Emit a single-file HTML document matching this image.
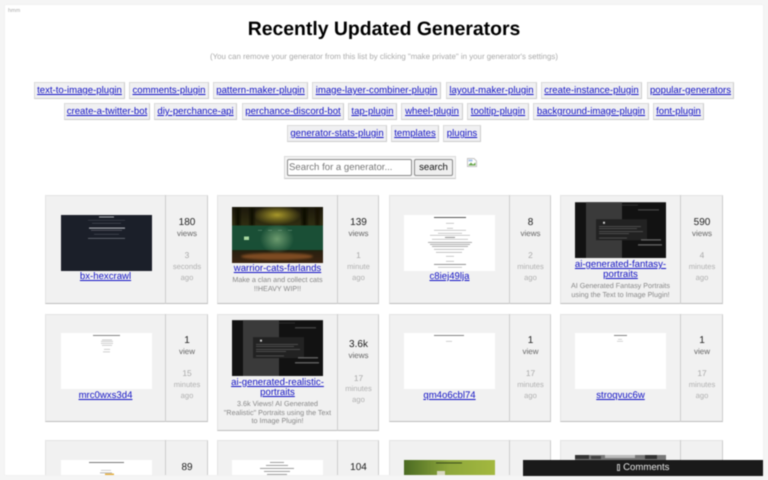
<!DOCTYPE html>
<html lang="en"><head><meta charset="utf-8"><title>Recently Updated Generators</title>
<style>
html,body{margin:0;padding:0;width:768px;height:480px;overflow:hidden;background:#f5f5f5}
body{font-family:"Liberation Sans",sans-serif;text-rendering:geometricPrecision;position:relative}
#all{position:absolute;left:0;top:0;width:768px;height:480px;overflow:hidden;filter:blur(.4px)}
#p{position:absolute;left:5px;top:5px;width:757.5px;height:470px;background:#fff;overflow:hidden;box-shadow:0 0 1px #ddd}
#w{position:absolute;left:-5px;top:-5px;width:768px;height:480px;overflow:hidden}
.a{position:absolute}
.tag{position:absolute;box-sizing:border-box;background:#f0f0f2;border:1px solid #dadada;border-right-color:#ccc;border-bottom-color:#ccc;text-align:center;font-size:9.6px;line-height:15px;white-space:nowrap}
a{color:#1111c4;text-decoration:underline}
.card{position:absolute;box-sizing:border-box;background:#f1f1f1;border:1px solid #e4e4e4;border-right-color:#ccc;border-bottom-color:#bdbdbd}
.open{border-bottom:0}
.div{position:absolute;width:1px;background:#cdcdcd}
.t{position:absolute;text-align:center;line-height:12px;height:12px;white-space:nowrap}
.c1{left:46px;width:119px}.c2{left:218px;width:119px}.c3{left:390px;width:119px}.c4{left:561px;width:119px}
.s1{left:166px;width:42px}.s2{left:338px;width:41px}.s3{left:510px;width:41px}.s4{left:681px;width:42px}
.n{font-size:9.6px}
.nu{font-size:10px;color:#222}
.v{font-size:8px;color:#666}
.g{font-size:8.400px;color:#aaa}
.mi{font-size:7.600px;color:#b0b0b0}
.d{font-size:7.200px;color:#888}
svg{position:absolute;display:block}
.th{filter:blur(.3px)}
</style></head><body><div id="all">
<div id="p"><div id="w">
<div class="t" style="left:8px;top:5px;font-size:5.500px;color:#aaa">hmm</div>
<div class="t" style="left:0;width:768px;top:21.500px;font-size:19.400px;line-height:14px;height:14px;font-weight:bold;color:#000">Recently Updated Generators</div>
<div class="t" style="left:0;width:768px;top:51px;font-size:7.900px;color:#aaa">(You can remove your generator from this list by clicking "make private" in your generator's settings)</div>

<div class="tag" style="left:34px;top:82px;width:91px;height:17px"><a href="#">text-to-image-plugin</a></div>
<div class="tag" style="left:129px;top:82px;width:80px;height:17px"><a href="#">comments-plugin</a></div>
<div class="tag" style="left:213px;top:82px;width:95px;height:17px"><a href="#">pattern-maker-plugin</a></div>
<div class="tag" style="left:312px;top:82px;width:129px;height:17px"><a href="#">image-layer-combiner-plugin</a></div>
<div class="tag" style="left:446px;top:82px;width:91px;height:17px"><a href="#">layout-maker-plugin</a></div>
<div class="tag" style="left:541px;top:82px;width:101px;height:17px"><a href="#">create-instance-plugin</a></div>
<div class="tag" style="left:647px;top:82px;width:87px;height:17px"><a href="#">popular-generators</a></div>

<div class="tag" style="left:64px;top:103px;width:86px;height:17px"><a href="#">create-a-twitter-bot</a></div>
<div class="tag" style="left:154px;top:103px;width:83px;height:17px"><a href="#">diy-perchance-api</a></div>
<div class="tag" style="left:242px;top:103px;width:102px;height:17px"><a href="#">perchance-discord-bot</a></div>
<div class="tag" style="left:348px;top:103px;width:49px;height:17px"><a href="#">tap-plugin</a></div>
<div class="tag" style="left:401px;top:103px;width:62px;height:17px"><a href="#">wheel-plugin</a></div>
<div class="tag" style="left:467px;top:103px;width:62px;height:17px"><a href="#">tooltip-plugin</a></div>
<div class="tag" style="left:533px;top:103px;width:116px;height:17px"><a href="#">background-image-plugin</a></div>
<div class="tag" style="left:653px;top:103px;width:51px;height:17px"><a href="#">font-plugin</a></div>

<div class="tag" style="left:287px;top:125px;width:100px;height:17px"><a href="#">generator-stats-plugin</a></div>
<div class="tag" style="left:391px;top:125px;width:48px;height:17px"><a href="#">templates</a></div>
<div class="tag" style="left:443px;top:125px;width:38px;height:17px"><a href="#">plugins</a></div>

<div class="a" style="left:284px;top:156px;width:172px;height:23px;box-sizing:border-box;background:#f4f4f4;border:1px solid #dadada;border-bottom-color:#c8c8c8"></div>
<div class="a" style="left:287px;top:159px;width:125px;height:17px;box-sizing:border-box;background:#fff;border:1px solid #8a8a8a;border-radius:2px;font-size:9.600px;line-height:15px;color:#777;padding-left:1px;white-space:nowrap">Search for a generator...</div>
<div class="a" style="left:414px;top:159px;width:39px;height:17px;box-sizing:border-box;background:#efefef;border:1px solid #8a8a8a;border-radius:2px;font-size:9.600px;line-height:15px;color:#111;text-align:center">search</div>
<svg style="left:467px;top:158px" width="10" height="9" viewBox="0 0 10 9"><path d="M.5.5H7L9.500 3V8.500H.5Z" fill="#fff" stroke="#c4c4c4"/><path d="M1.500 7L4 4.500 6 6.500 8.500 4.500V7.500H1.500Z" fill="#6aa84f"/><path d="M1.500 1.500H5.500V3.500H1.500Z" fill="#a9c4ea"/></svg>

<!-- Row 1 -->
<div class="card" style="left:45px;top:195px;width:163px;height:109px"></div><div class="div" style="left:165px;top:195px;height:109px"></div>
<svg class="th" style="left:60.500px;top:215px" width="91" height="56" viewBox="0 0 91 56"><rect width="91" height="56" fill="#1b1f29"/><g fill="#8f929a"><rect x="38" y="1.500" width="15" height="1" fill="#aaacb2"/><rect x="27" y="5" width="37" height=".5" opacity=".4"/><rect x="31" y="8" width="29" height=".5" opacity=".5"/><rect x="28" y="12.500" width="36" height="1.200" fill="#a6a8ae"/><rect x="30" y="15" width="31" height=".6" opacity=".7"/><rect x="33" y="19" width="25" height=".5" opacity=".5"/><rect x="27" y="23" width="37" height=".7" opacity=".8"/></g></svg>
<div class="t n c1" style="top:271px"><a href="#">bx-hexcrawl</a></div>
<div class="t nu s1" style="top:216.500px">180</div><div class="t v s1" style="top:228px">views</div><div class="t g s1" style="top:249px">3</div><div class="t mi s1" style="top:260.500px">seconds</div><div class="t mi s1" style="top:271.500px">ago</div>

<div class="card" style="left:217px;top:195px;width:162px;height:109px"></div><div class="div" style="left:337px;top:195px;height:109px"></div>
<svg class="th" style="left:232px;top:206.500px" width="91" height="56" viewBox="0 0 91 56"><defs><linearGradient id="f" x1="0" y1="0" x2="0" y2="1"><stop offset="0" stop-color="#1c180c"/><stop offset=".3" stop-color="#2e2c10"/><stop offset=".75" stop-color="#1a2412"/><stop offset=".82" stop-color="#2c2010"/><stop offset="1" stop-color="#3a2412"/></linearGradient><radialGradient id="l" cx=".5" cy=".5" r=".5"><stop offset="0" stop-color="#a8982a"/><stop offset="1" stop-color="#a8982a" stop-opacity="0"/></radialGradient><radialGradient id="l2" cx=".5" cy=".5" r=".5"><stop offset="0" stop-color="#7aa878" stop-opacity=".85"/><stop offset="1" stop-color="#7aa878" stop-opacity="0"/></radialGradient><filter id="b1"><feGaussianBlur stdDeviation="1"/></filter></defs><rect width="91" height="56" fill="url(#f)"/><ellipse cx="45" cy="8" rx="24" ry="10" fill="url(#l)"/><g filter="url(#b1)"><rect x="4" width="4" height="19" fill="#0e0b06"/><rect x="18" width="4" height="19" fill="#100c06"/><rect x="70" width="5" height="19" fill="#100c06"/><rect x="84" width="3" height="19" fill="#141006"/></g><rect y="18.500" width="91" height="24.500" fill="#195238" opacity=".94"/><ellipse cx="45" cy="32" rx="17" ry="15" fill="url(#l2)"/><rect x="12" y="29.500" width="5" height="3.500" fill="#a8d8a0"/><g fill="#8fb59a" opacity=".6"><rect x="26" y="23" width="4" height=".6"/><rect x="36" y="23" width="4" height=".6"/><rect x="46" y="23" width="4" height=".6"/><rect x="56" y="23" width="4" height=".6"/></g><ellipse cx="45" cy="49.500" rx="36" ry="3.500" fill="#7e4c20" filter="url(#b1)"/></svg>
<div class="t n c2" style="top:262.700px"><a href="#">warrior-cats-farlands</a></div>
<div class="t d c2" style="top:274px">Make a clan and collect cats</div><div class="t d c2" style="top:283px">!!HEAVY WIP!!</div>
<div class="t nu s2" style="top:216.500px">139</div><div class="t v s2" style="top:228px">views</div><div class="t g s2" style="top:249px">1</div><div class="t mi s2" style="top:260.500px">minute</div><div class="t mi s2" style="top:271.500px">ago</div>

<div class="card" style="left:389px;top:195px;width:162px;height:109px"></div><div class="div" style="left:509px;top:195px;height:109px"></div>
<svg class="th" style="left:404px;top:215px" width="91" height="56" viewBox="0 0 91 56"><rect width="91" height="56" fill="#fff"/><g fill="#aaa"><rect x="30" y="2" width="32" height="1" fill="#555"/><rect x="42" y="8" width="8" height=".6"/><rect x="43" y="13" width="6" height=".6"/><rect x="30" y="15" width="32" height=".6"/><rect x="34" y="18" width="24" height=".6"/><rect x="26" y="20" width="40" height=".6"/><rect x="41" y="22" width="10" height=".8" fill="#777"/><rect x="28" y="24" width="36" height=".6"/><rect x="24" y="27" width="44" height=".8" fill="#999"/><rect x="26" y="29" width="40" height=".8" fill="#999"/><rect x="28" y="31" width="36" height=".8" fill="#999"/><rect x="30" y="34" width="30" height=".7"/><rect x="32" y="37" width="26" height=".7"/><rect x="42" y="41" width="8" height=".6"/><rect x="42" y="46" width="8" height=".6"/><rect x="30" y="49" width="32" height=".8" fill="#777"/><rect x="34" y="52" width="24" height=".6"/></g></svg>
<div class="t n c3" style="top:271px"><a href="#">c8iej49lja</a></div>
<div class="t nu s3" style="top:216.500px">8</div><div class="t v s3" style="top:228px">views</div><div class="t g s3" style="top:249px">2</div><div class="t mi s3" style="top:260.500px">minutes</div><div class="t mi s3" style="top:271.500px">ago</div>

<div class="card" style="left:560px;top:195px;width:163px;height:109px"></div><div class="div" style="left:680px;top:195px;height:109px"></div>
<svg class="th" style="left:575.300px;top:201.700px" width="91" height="56.500" viewBox="0 0 91 56"><rect width="91" height="56" fill="#121212"/><rect x="11" width="36" height="56" fill="#3a3a3a"/><rect x="21" y="17" width="51" height="21" fill="#222"/><rect x="28" y="19.500" width="2" height="2" fill="#ccc"/><g fill="#666"><rect x="24" y="24" width="42" height=".6"/><rect x="24" y="26" width="38" height=".6"/><rect x="24" y="29" width="44" height=".6"/><rect x="24" y="31" width="30" height=".6"/><rect x="24" y="35.500" width="28" height=".6"/></g><rect x="63" y="7" width="21" height="1.300" fill="#444"/><rect x="66" y="37" width="20" height="1.300" fill="#666"/><rect x="63" y="42" width="24" height="1.300" fill="#666"/><rect x="27" y="2.500" width="36" height=".7" fill="#3a3a3a"/></svg>
<div class="t n c4" style="top:259px"><a href="#">ai-generated-fantasy-</a></div><div class="t n c4" style="top:269px"><a href="#">portraits</a></div>
<div class="t d c4" style="top:280px">AI Generated Fantasy Portraits</div><div class="t d c4" style="top:289px">using the Text to Image Plugin!</div>
<div class="t nu s4" style="top:216.500px">590</div><div class="t v s4" style="top:228px">views</div><div class="t g s4" style="top:249px">4</div><div class="t mi s4" style="top:260.500px">minutes</div><div class="t mi s4" style="top:271.500px">ago</div>

<!-- Row 2 -->
<div class="card" style="left:45px;top:314px;width:163px;height:108px"></div><div class="div" style="left:165px;top:314px;height:108px"></div>
<svg class="th" style="left:60.500px;top:333.300px" width="91" height="56" viewBox="0 0 91 56"><rect width="91" height="56" fill="#fff"/><rect x="32" y="2" width="27" height=".9" fill="#777"/><g fill="#bbb"><rect x="41" y="6.500" width="10" height=".7"/><rect x="40" y="8" width="12" height=".7"/><rect x="40" y="10" width="12" height=".7"/><rect x="41" y="12" width="10" height=".7"/><rect x="43" y="16" width="6" height=".7"/><rect x="42" y="18.500" width="7" height=".7"/></g></svg>
<div class="t n c1" style="top:389.500px"><a href="#">mrc0wxs3d4</a></div>
<div class="t nu s1" style="top:334.500px">1</div><div class="t v s1" style="top:346px">view</div><div class="t g s1" style="top:367px">15</div><div class="t mi s1" style="top:378.500px">minutes</div><div class="t mi s1" style="top:389.500px">ago</div>

<div class="card" style="left:217px;top:314px;width:162px;height:117px"></div><div class="div" style="left:337px;top:314px;height:117px"></div>
<svg class="th" style="left:232px;top:320px" width="91" height="56.300" viewBox="0 0 91 56"><rect width="91" height="56" fill="#121212"/><rect x="11" width="36" height="56" fill="#3a3a3a"/><rect x="21" y="17" width="51" height="21" fill="#222"/><rect x="28" y="19.500" width="2" height="2" fill="#ccc"/><g fill="#666"><rect x="24" y="24" width="42" height=".6"/><rect x="24" y="26" width="38" height=".6"/><rect x="24" y="29" width="44" height=".6"/><rect x="24" y="31" width="30" height=".6"/><rect x="24" y="35.500" width="28" height=".6"/></g><rect x="63" y="7" width="21" height="1.300" fill="#444"/><rect x="66" y="37" width="20" height="1.300" fill="#666"/><rect x="63" y="42" width="24" height="1.300" fill="#666"/><rect x="27" y="2.500" width="36" height=".7" fill="#3a3a3a"/></svg>
<div class="t n c2" style="top:376.600px"><a href="#">ai-generated-realistic-</a></div><div class="t n c2" style="top:386.800px"><a href="#">portraits</a></div>
<div class="t d c2" style="top:398px">3.6k Views! AI Generated</div><div class="t d c2" style="top:406.700px">"Realistic" Portraits using the Text</div><div class="t d c2" style="top:415.300px">to Image Plugin!</div>
<div class="t nu s2" style="top:338.500px">3.6k</div><div class="t v s2" style="top:350px">views</div><div class="t g s2" style="top:371.500px">17</div><div class="t mi s2" style="top:383px">minutes</div><div class="t mi s2" style="top:394px">ago</div>

<div class="card" style="left:389px;top:314px;width:162px;height:108px"></div><div class="div" style="left:509px;top:314px;height:108px"></div>
<svg class="th" style="left:404px;top:333.300px" width="91" height="56" viewBox="0 0 91 56"><rect width="91" height="56" fill="#fff"/><rect x="30" y="2" width="30" height=".9" fill="#777"/><rect x="42" y="8" width="6" height=".7" fill="#bbb"/></svg>
<div class="t n c3" style="top:389.500px"><a href="#">qm4o6cbl74</a></div>
<div class="t nu s3" style="top:334.500px">1</div><div class="t v s3" style="top:346px">view</div><div class="t g s3" style="top:367px">17</div><div class="t mi s3" style="top:378.500px">minutes</div><div class="t mi s3" style="top:389.500px">ago</div>

<div class="card" style="left:560px;top:314px;width:163px;height:108px"></div><div class="div" style="left:680px;top:314px;height:108px"></div>
<svg class="th" style="left:575.300px;top:333.300px" width="91" height="56" viewBox="0 0 91 56"><rect width="91" height="56" fill="#fff"/><rect x="39" y="2" width="13" height=".9" fill="#777"/><rect x="43" y="6" width="4" height=".6" fill="#bbb"/><rect x="42" y="8" width="6" height=".6" fill="#bbb"/></svg>
<div class="t n c4" style="top:389.500px"><a href="#">stroqvuc6w</a></div>
<div class="t nu s4" style="top:334.500px">1</div><div class="t v s4" style="top:346px">view</div><div class="t g s4" style="top:367px">17</div><div class="t mi s4" style="top:378.500px">minutes</div><div class="t mi s4" style="top:389.500px">ago</div>

<!-- Row 3 -->
<div class="card open" style="left:45px;top:440px;width:163px;height:35px"></div><div class="div" style="left:165px;top:440px;height:35px"></div>
<svg class="th" style="left:60.500px;top:459.500px" width="91" height="15.500" viewBox="0 0 91 15.500"><rect width="91" height="15.500" fill="#fff"/><rect x="28" y="2" width="35" height="1" fill="#777"/><rect x="40" y="10" width="10" height=".7" fill="#bbb"/><rect x="39" y="12.500" width="12" height=".7" fill="#999"/><rect x="44" y="13.500" width="9" height="2" fill="#e5b040"/></svg>
<div class="t nu s1" style="top:461.500px">89</div>

<div class="card open" style="left:217px;top:440px;width:162px;height:35px"></div><div class="div" style="left:337px;top:440px;height:35px"></div>
<svg class="th" style="left:232px;top:459.500px" width="91" height="15.500" viewBox="0 0 91 15.500"><rect width="91" height="15.500" fill="#fff"/><g fill="#888"><rect x="38" y="2" width="14" height=".8"/><rect x="34" y="5" width="22" height=".8"/><rect x="28" y="8" width="34" height=".8"/><rect x="32" y="11" width="26" height=".8"/><rect x="35" y="14" width="20" height=".8"/></g></svg>
<div class="t nu s2" style="top:461.500px">104</div>

<div class="card open" style="left:389px;top:440px;width:162px;height:35px"></div><div class="div" style="left:509px;top:440px;height:35px"></div>
<svg class="th" style="left:404px;top:459.500px" width="91" height="15.500" viewBox="0 0 91 15.500"><defs><linearGradient id="gr" x1="0" x2="1" y1="0" y2="0"><stop offset="0" stop-color="#4a6a22"/><stop offset=".5" stop-color="#8fa83c"/><stop offset="1" stop-color="#a3b83f"/></linearGradient></defs><rect width="91" height="15.500" fill="url(#gr)"/><rect x="32" y="2.500" width="26" height=".9" fill="#33441a"/><rect x="33" y="11" width="8" height="4" fill="#d8d8c0"/></svg>

<div class="card open" style="left:560px;top:440px;width:163px;height:35px"></div><div class="div" style="left:680px;top:440px;height:35px"></div>
<svg class="th" style="left:575.300px;top:455px" width="91" height="20" viewBox="0 0 91 20"><rect width="91" height="20" fill="#777"/><rect x="30" y="0" width="30" height="3" fill="#bbb"/><rect x="0" y="0" width="14" height="4" fill="#333"/><rect x="70" y="0" width="12" height="4" fill="#333"/><rect x="16" y="1" width="10" height="3" fill="#444"/></svg>
</div></div>

<div class="a" style="left:522.600px;top:459.500px;width:240px;height:16px;background:#1a1a1a;color:#e8e8e8;font-size:9.600px;line-height:15.500px;white-space:nowrap"><span class="a" style="left:94px;top:4.500px;width:3px;height:6.500px;border:.6px solid #bbb;box-sizing:border-box"></span><span class="a" style="left:100.500px;top:0">Comments</span></div>
</div></body></html>
